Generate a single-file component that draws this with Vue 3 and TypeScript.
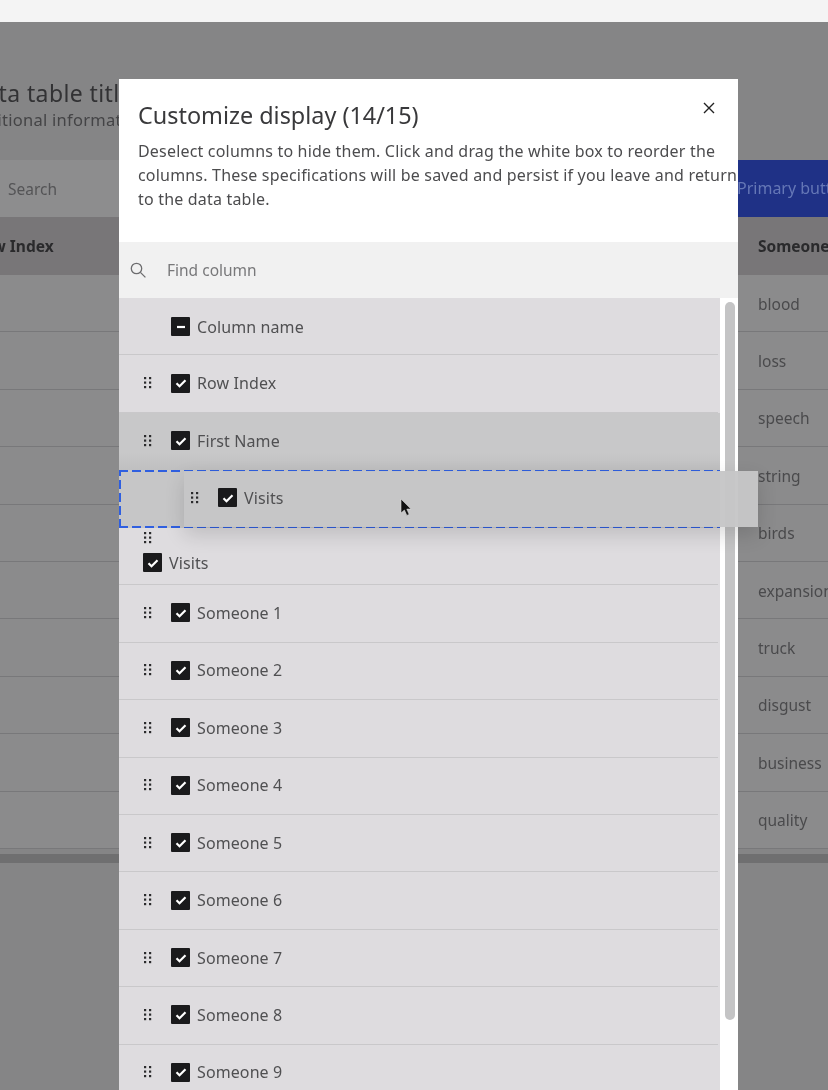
<script setup lang="ts">
const bgRows: string[] = ['blood', 'loss', 'speech', 'string', 'birds', 'expansion', 'truck', 'disgust', 'business', 'quality']
const someones: string[] = [1, 2, 3, 4, 5, 6, 7, 8, 9].map((n) => `Someone ${n}`)
const dots: number[][] = [[1, 1], [6, 1], [1, 5.5], [6, 5.5], [1, 10], [6, 10]]
</script>

<template>
  <div class="screen">
    <div class="topbar"></div>
    <main class="page">
      <header class="page-head">
        <h1 class="page-title">Data table title</h1>
        <p class="page-sub">Additional information</p>
      </header>
      <div class="toolbar">
        <span class="search-label">Search</span>
        <span class="primary">Primary button</span>
      </div>
      <div class="thead">
        <span class="th-left">Row Index</span>
        <span class="th-right">Someone 1</span>
      </div>
      <div v-for="r in bgRows" :key="r" class="trow">
        <span class="td">{{ r }}</span>
      </div>
      <div class="hscroll"></div>
    </main>

    <section class="modal">
      <div class="modal-head">
        <h2 class="modal-title">Customize display (14/15)</h2>
        <svg class="close" width="16" height="16" viewBox="0 0 16 16"><path d="M3 3l10 10M13 3L3 13" stroke="#222" stroke-width="1.4" fill="none" /></svg>
        <p class="modal-desc">
          <span>Deselect columns to hide them. Click and drag the white box to reorder the</span>
          <span>columns. These specifications will be saved and persist if you leave and return</span>
          <span>to the data table.</span>
        </p>
      </div>
      <div class="find">
        <svg width="18" height="18" viewBox="0 0 18 18"><circle cx="7.5" cy="7.5" r="5.2" stroke="#6d6d6f" stroke-width="1.3" fill="none" /><path d="M11.4 11.4l5 5" stroke="#6d6d6f" stroke-width="1.3" /></svg>
        <span class="find-text">Find column</span>
      </div>
      <div class="list-wrap">
        <div class="list">
          <div class="row row-first">
            <span class="handle-space"></span>
            <span class="cb"><svg width="12" height="12" viewBox="0 0 12 12"><path d="M2 6h8" stroke="#fff" stroke-width="2.2" /></svg></span>
            <span class="label">Column name</span>
          </div>
          <div class="row">
            <svg class="handle" width="10" height="14" viewBox="0 0 10 14"><rect v-for="(d, i) in dots" :key="i" :x="d[0]" :y="d[1]" width="2.2" height="2.2" fill="#2a2a2c" /></svg>
            <span class="cb"><svg width="14" height="14" viewBox="0 0 14 14"><path d="M2.5 7.3l3 2.9 6-6" stroke="#fff" stroke-width="2.2" fill="none" /></svg></span>
            <span class="label">Row Index</span>
          </div>
          <div class="row row-hover">
            <svg class="handle" width="10" height="14" viewBox="0 0 10 14"><rect v-for="(d, i) in dots" :key="i" :x="d[0]" :y="d[1]" width="2.2" height="2.2" fill="#2a2a2c" /></svg>
            <span class="cb"><svg width="14" height="14" viewBox="0 0 14 14"><path d="M2.5 7.3l3 2.9 6-6" stroke="#fff" stroke-width="2.2" fill="none" /></svg></span>
            <span class="label">First Name</span>
          </div>
          <div class="row row-drop"></div>
          <div class="row row-wrapped">
            <svg class="handle handle-wrapped" width="10" height="14" viewBox="0 0 10 14"><rect v-for="(d, i) in dots" :key="i" :x="d[0]" :y="d[1]" width="2.2" height="2.2" fill="#2a2a2c" /></svg>
            <div class="wrapped-line">
              <span class="cb"><svg width="14" height="14" viewBox="0 0 14 14"><path d="M2.5 7.3l3 2.9 6-6" stroke="#fff" stroke-width="2.2" fill="none" /></svg></span>
              <span class="label">Visits</span>
            </div>
          </div>
          <div v-for="s in someones" :key="s" class="row">
            <svg class="handle" width="10" height="14" viewBox="0 0 10 14"><rect v-for="(d, i) in dots" :key="i" :x="d[0]" :y="d[1]" width="2.2" height="2.2" fill="#2a2a2c" /></svg>
            <span class="cb"><svg width="14" height="14" viewBox="0 0 14 14"><path d="M2.5 7.3l3 2.9 6-6" stroke="#fff" stroke-width="2.2" fill="none" /></svg></span>
            <span class="label">{{ s }}</span>
          </div>
        </div>
        <div class="track"><div class="thumb"></div></div>
      </div>
    </section>

    <div class="drag">
      <svg class="handle" width="10" height="14" viewBox="0 0 10 14"><rect v-for="(d, i) in dots" :key="i" :x="d[0]" :y="d[1]" width="2.2" height="2.2" fill="#2a2a2c" /></svg>
      <span class="cb"><svg width="14" height="14" viewBox="0 0 14 14"><path d="M2.5 7.3l3 2.9 6-6" stroke="#fff" stroke-width="2.2" fill="none" /></svg></span>
      <span class="label">Visits</span>
    </div>
    <svg class="cursor" width="14" height="20" viewBox="0 0 14 20"><path d="M1 1v14l3.4-3 2.4 5.4 2.4-1-2.4-5.3H11z" fill="#111" stroke="#ddd" stroke-width=".6" /></svg>
  </div>
</template>

<style>
html, body { margin: 0; background: #868687; }
</style>

<style scoped>
.screen {
  position: relative;
  width: 828px;
  height: 1090px;
  overflow: hidden;
  font-family: "Noto Sans", "Open Sans", sans-serif;
  background: #858586;
  filter: blur(0.55px);
}
.topbar { height: 22px; background: #f4f4f4; }
.page { display: flex; flex-direction: column; color: #3a3a3c; }
.page-head { height: 138px; box-sizing: border-box; padding-top: 57px; margin-left: -32px; white-space: nowrap; }
.page-title { margin: 0; font-size: 23px; letter-spacing: 0.4px; font-weight: 400; line-height: 28px; color: #323234; }
.page-sub { margin: 4px 0 0 -2px; font-size: 16.5px; letter-spacing: 0.25px; line-height: 18px; color: #444446; }
.toolbar { height: 57px; background: #8d8d8e; display: flex; justify-content: space-between; align-items: center; }
.search-label { margin-left: 8px; font-size: 15.5px; color: #545456; }
.primary { width: 91px; height: 57px; line-height: 57px; background: #1f3186; color: #6577b6; font-size: 16px; white-space: nowrap; overflow: hidden; }
.thead { height: 58px; background: #787678; display: flex; justify-content: space-between; align-items: center; font-size: 15.5px; font-weight: 700; color: #2a2a2c; }
.th-left { margin-left: -27px; white-space: nowrap; }
.th-right { width: 70px; white-space: nowrap; overflow: hidden; }
.trow { height: 57.4px; box-sizing: border-box; border-bottom: 1px solid #78787a; background: #8b8b8c; display: flex; justify-content: flex-end; align-items: center; padding-top: 1px; }
.td { width: 70px; font-size: 15.5px; color: #4a4a4c; white-space: nowrap; overflow: hidden; }
.hscroll { height: 9px; margin-top: 5px; background: #6f6f70; }

.modal {
  position: absolute;
  left: 119px;
  top: 79px;
  width: 619px;
  height: 1011px;
  background: #fff;
  display: flex;
  flex-direction: column;
}
.modal-head { position: relative; height: 163px; box-sizing: border-box; padding: 21px 0 0 19px; }
.modal-title { margin: 0; font-size: 23.4px; font-weight: 400; line-height: 30px; color: #39393b; }
.close { position: absolute; right: 21px; top: 21px; }
.modal-desc { margin: 10px 0 0; font-size: 16px; letter-spacing: 0.19px; line-height: 23.8px; color: #4c4c4e; }
.modal-desc span { display: block; white-space: nowrap; }
.find { height: 56px; background: #f1f1f1; display: flex; align-items: center; padding-left: 10px; }
.find-text { margin-left: 20px; font-size: 15.5px; color: #78787a; }
.list-wrap { flex: 1; display: flex; min-height: 0; }
.list { width: 601px; }
.track { flex: 1; padding: 4px 3px 0 5px; }
.thumb { height: 718px; background: #c4c4c5; border-radius: 5px; }
.row {
  height: 57.45px;
  box-sizing: border-box;
  padding-bottom: 2px;
  background: linear-gradient(#c9c8ca, #c9c8ca) left bottom / 599px 1px no-repeat, #dedcdf;
  display: flex;
  align-items: center;
}
.row-first { padding-bottom: 0; }
.handle { margin-left: 24px; flex: none; }
.handle-space { width: 34px; flex: none; }
.cb {
  width: 19px;
  height: 19px;
  margin-left: 18px;
  background: #1a1a1c;
  border-radius: 1px;
  display: flex;
  align-items: center;
  justify-content: center;
  flex: none;
}
.label { margin-left: 7px; font-size: 16px; letter-spacing: 0.1px; color: #505052; white-space: nowrap; }
.row-hover { background: linear-gradient(#c8c8c9 70%, #bfbfc0); }
.row-drop {
  padding: 0;
  background:
    repeating-linear-gradient(90deg, #2f5fe0 0 9px, transparent 9px 13px) left top / 100% 2px no-repeat,
    repeating-linear-gradient(90deg, #2f5fe0 0 9px, transparent 9px 13px) left bottom / 100% 2px no-repeat,
    repeating-linear-gradient(0deg, #2f5fe0 0 9px, transparent 9px 13px) left top / 2px 100% no-repeat,
    #c6c6c7;
}
.row-wrapped { display: block; padding-top: 3px; }
.handle-wrapped { display: block; }
.wrapped-line { display: flex; align-items: center; margin-top: 7px; margin-left: 6px; }

.drag {
  position: absolute;
  left: 184px;
  top: 471px;
  width: 574px;
  height: 55.5px;
  padding-bottom: 2px;
  box-sizing: border-box;
  background: rgba(198, 198, 199, 0.97);
  box-shadow: 0 8px 20px rgba(0, 0, 0, 0.14);
  display: flex;
  align-items: center;
}
.drag .handle { margin-left: 6px; }
.cursor { position: absolute; left: 400px; top: 498px; }
</style>
